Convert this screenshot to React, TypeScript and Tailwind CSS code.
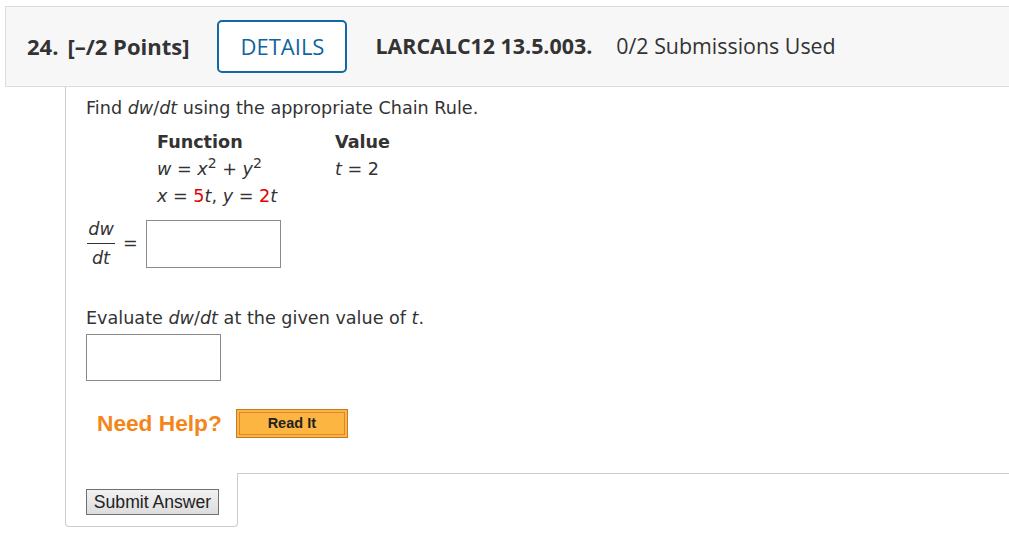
import React from "react";

const verdana = "font-['DejaVu_Sans',Verdana,sans-serif]";
const arial = "font-['Liberation_Sans',Arial,sans-serif]";

export default function App() {
  return (
    <div className="w-[1009px] h-[542px] overflow-hidden bg-white pt-[6px] text-[#333]">
      {/* header */}
      <div className="ml-[5px] w-[1010px] h-[81px] border border-[#dcdcdc] bg-[#f7f7f7] flex items-center pl-[21px] pb-[1px] font-['Open_Sans',sans-serif] text-[22px] text-[#333]">
        <span className="font-bold">24.</span>
        <span className="font-bold ml-[9px]">[–/2 Points]</span>
        <button className="ml-[28px] w-[130px] h-[53px] border-2 border-[#0f6aa3] rounded-[5px] bg-white text-[#0f64a0] text-[22px]">
          DETAILS
        </button>
        <span className="font-bold ml-[28px] text-[21.4px]">LARCALC12 13.5.003.</span>
        <span className="ml-[24px] text-[21.4px]">0/2 Submissions Used</span>
      </div>

      {/* body */}
      <div className="ml-[65px] w-[944px]">
        <div className={`border-l border-[#cccccc] pl-[20px] pt-[8px] h-[386px] ${verdana} text-[17.6px] text-[#333]`}>
          <p className="leading-[26px]">
            Find <i>dw</i>/<i>dt</i> using the appropriate Chain Rule.
          </p>
          <div className="ml-[71px] mt-[8px] grid grid-cols-[178px_auto] leading-[27px]">
            <span className="font-bold">Function</span>
            <span className="font-bold">Value</span>
            <span>
              <i>w</i> = <i>x</i>
              <sup className="text-[14px]">2</sup> + <i>y</i>
              <sup className="text-[14px]">2</sup>
            </span>
            <span>
              <i>t</i> = 2
            </span>
            <span>
              <i>x</i> = <span className="text-[#e00000]">5</span>
              <i>t</i>, <i>y</i> = <span className="text-[#e00000]">2</span>
              <i>t</i>
            </span>
            <span />
          </div>
          <div className="flex items-center mt-[8px]">
            <div className="flex flex-col items-center w-[28px] ml-[1px]">
              <i className="leading-[22px]">dw</i>
              <div className="w-[28px] h-px bg-[#333] my-[3px]" />
              <i className="leading-[22px]">dt</i>
            </div>
            <span className="ml-[8px]">=</span>
            <div className="ml-[8px] w-[135px] h-[48px] border border-[#8a8a8a] bg-white" />
          </div>
          <p className="leading-[26px] mt-[36px]">
            Evaluate <i>dw</i>/<i>dt</i> at the given value of <i>t</i>.
          </p>
          <div className="mt-[3px] w-[135px] h-[47px] border border-[#8a8a8a] bg-white" />
          <div className="flex items-center mt-[25px] ml-[11px]">
            <span className={`${arial} font-bold text-[22.7px] text-[#f3861a]`}>Need Help?</span>
            <button className="ml-[14px] w-[112px] h-[29px] border border-[#c77a26] bg-[#fbb540] p-[2px]">
              <span
                className={`block w-full h-full border border-[#d9892e] ${arial} font-bold text-[14.5px] leading-[21px] text-[#222]`}
              >
                Read It
              </span>
            </button>
          </div>
        </div>
        <div className="flex">
          <div className="w-[173px] h-[54px] border-l border-r border-b border-[#cccccc] rounded-b-[4px] pl-[20px] pt-[16px]">
            <button
              className={`w-[133px] h-[26px] border border-[#707070] bg-gradient-to-b from-[#f2f2f2] to-[#dddddd] ${arial} text-[17.6px] text-[#222] leading-[22px]`}
            >
              Submit Answer
            </button>
          </div>
          <div className="flex-1 border-t border-[#cccccc]" />
        </div>
      </div>
    </div>
  );
}
